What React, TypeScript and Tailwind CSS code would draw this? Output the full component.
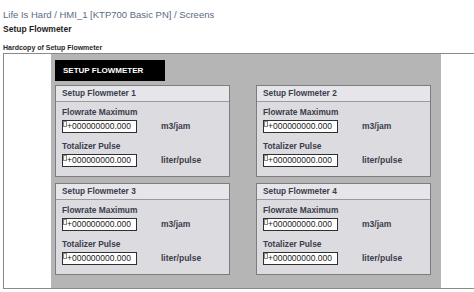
import React from "react";

type Field = { label: string; unit: string };

const fields: Field[] = [
  { label: "Flowrate Maximum", unit: "m3/jam" },
  { label: "Totalizer Pulse", unit: "liter/pulse" },
];

function ValueBox() {
  return (
    <div className="relative flex h-[13px] w-[75px] items-center border-[1.5px] border-[#2f2f2f] bg-white pl-[4px]">
      {/* small tag marker in the corner */}
      <span className="absolute left-[0px] top-[0px] h-[6px] w-[4px] border border-[#8a8a8a] bg-[#f4f4f4]" />
      <span className="text-[8.5px] leading-none text-[#222]">+000000000.000</span>
    </div>
  );
}

function FlowPanel({ n }: { n: number }) {
  return (
    <div className="flex flex-col border border-[#7d7d80] bg-[#dcdbe0]">
      <div className="flex h-[16px] items-center border-b border-[#9a9a9e] bg-[#e6e5ea] pl-[6px] text-[8.3px] font-bold text-[#3a3d4a]">
        Setup Flowmeter {n}
      </div>
      <div className="flex flex-col px-[6px] pb-[9px] pt-[5px]">
        {fields.map((f, i) => (
          <div key={f.label} className={i > 0 ? "mt-[8px]" : ""}>
            <div className="h-[10px] text-[8.4px] font-bold leading-[10px] text-[#3a3d4a]">
              {f.label}
            </div>
            <div className="mt-[3px] flex items-center">
              <ValueBox />
              <span className="ml-[24px] text-[8.5px] font-bold text-[#3a3d4a]">
                {f.unit}
              </span>
            </div>
          </div>
        ))}
      </div>
    </div>
  );
}

export default function App() {
  return (
    <div
      className="h-[292px] w-[474px] overflow-hidden bg-white"
      style={{ fontFamily: '"Liberation Sans", Arial, sans-serif' }}
    >
      <div className="pl-[3px] pt-[8px]">
        <div className="h-[13px] text-[9.5px] leading-[13px] text-[#5b6c80]">
          Life Is Hard / HMI_1 [KTP700 Basic PN] / Screens
        </div>
        <div className="mt-[2px] h-[12px] text-[8.5px] font-bold leading-[12px] text-[#1e1e1e]">
          Setup Flowmeter
        </div>
        <div className="mt-[7px] h-[11px] text-[7px] font-semibold leading-[11px] text-[#2a2a2a]">
          Hardcopy of Setup Flowmeter
        </div>
      </div>

      <div className="ml-[3px] flex h-[236px] w-[480px] border border-r-0 border-[#8a8a8a]">
        <div className="w-[47px]" />
        <div className="flex w-[390px] flex-col bg-[#b5b5b5] px-[4px] pt-[6px]">
          <div className="flex h-[21px] w-[110px] items-center bg-black pl-[8px] text-[8px] font-bold text-white">
            SETUP FLOWMETER
          </div>
          <div className="mt-[4px] grid grid-cols-[175px_175px] gap-x-[26px] gap-y-[6px]">
            <FlowPanel n={1} />
            <FlowPanel n={2} />
            <FlowPanel n={3} />
            <FlowPanel n={4} />
          </div>
        </div>
      </div>
    </div>
  );
}
